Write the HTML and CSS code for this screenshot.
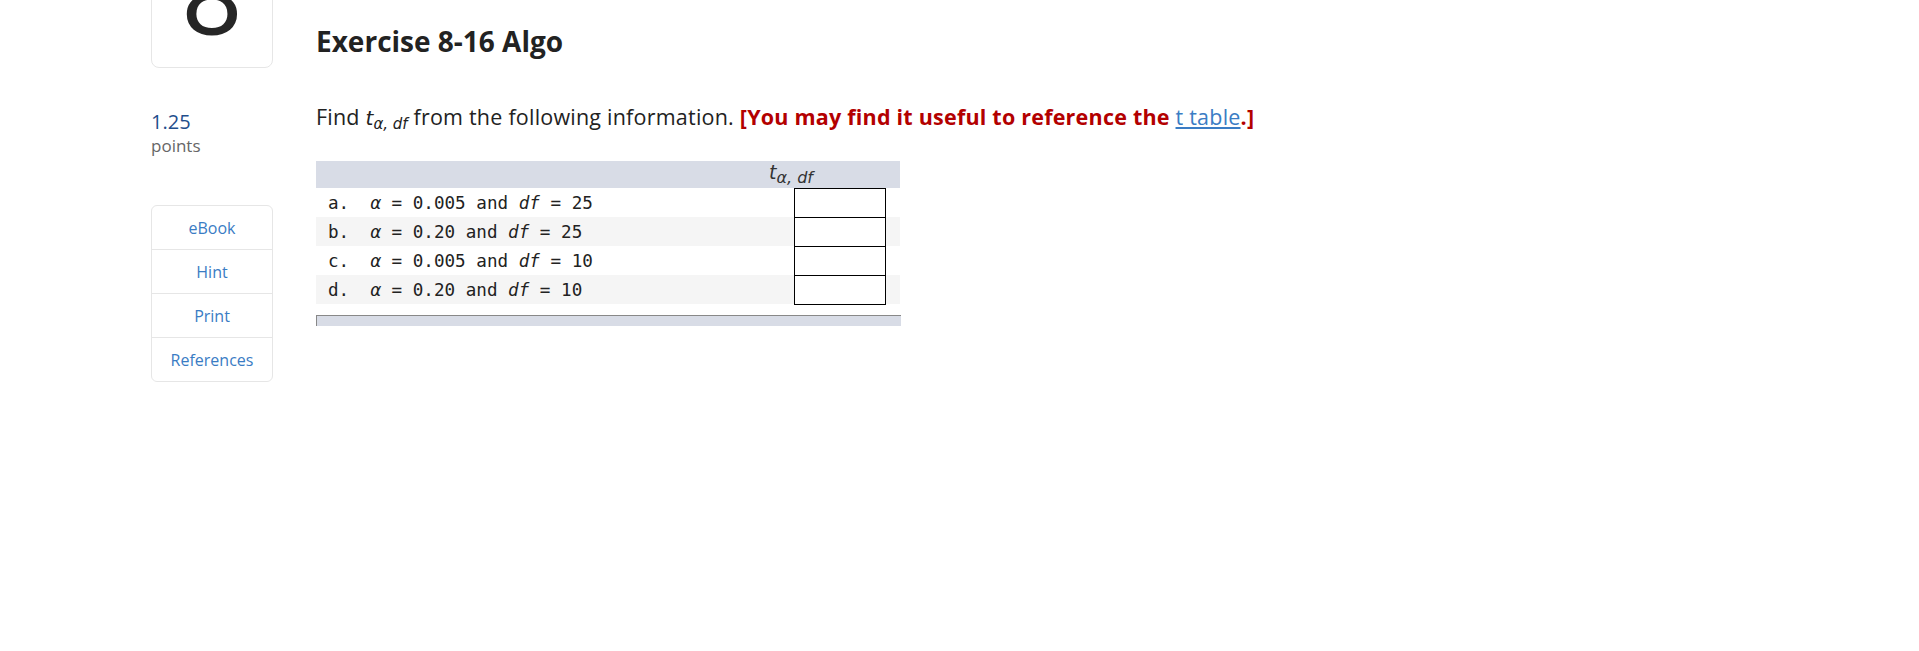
FILE: index.html
```html
<!DOCTYPE html>
<html>
<head>
<meta charset="utf-8">
<link rel="stylesheet" href="styles.css">
</head>
<body>
<div class="page">
  <div class="left">
    <div class="qnum"><span class="digit">8</span></div>
    <div class="points">
      <div class="pts-num">1.25</div>
      <div class="pts-label">points</div>
    </div>
    <div class="tools">
      <div class="tool">eBook</div>
      <div class="tool">Hint</div>
      <div class="tool">Print</div>
      <div class="tool">References</div>
    </div>
  </div>
  <div class="main">
    <h1 class="title">Exercise 8-16 Algo</h1>
    <p class="question">Find <span class="math">t<sub>α, df</sub></span> from the following information. <span class="hint">[You may find it useful to reference the <a class="link">t table</a>.]</span></p>
    <div class="qtable">
      <div class="thead"><span class="math hmath">t<sub>α, df</sub></span></div>
      <div class="trow"><span class="mono">a.  <i class="mi">α</i> = 0.005 and <i class="mi">df</i> = 25</span><span class="inp"></span></div>
      <div class="trow alt"><span class="mono">b.  <i class="mi">α</i> = 0.20 and <i class="mi">df</i> = 25</span><span class="inp"></span></div>
      <div class="trow"><span class="mono">c.  <i class="mi">α</i> = 0.005 and <i class="mi">df</i> = 10</span><span class="inp"></span></div>
      <div class="trow alt"><span class="mono">d.  <i class="mi">α</i> = 0.20 and <i class="mi">df</i> = 10</span><span class="inp"></span></div>
    </div>
    <div class="tfoot"></div>
  </div>
</div>
</body>
</html>
```

FILE: styles.css
```css
html, body {
  margin: 0;
  padding: 0;
  background: #fff;
  overflow: hidden;
}
body {
  font-family: "Open Sans", "Liberation Sans", sans-serif;
  color: #222;
}
.page {
  display: flex;
  padding-left: 151px;
}
.left {
  width: 122px;
  flex: none;
}
.qnum {
  box-sizing: border-box;
  height: 120px;
  margin-top: -52px;
  border: 1px solid #e6e6e6;
  border-radius: 8px;
  overflow: hidden;
  display: flex;
  justify-content: center;
  align-items: flex-end;
}
.digit {
  font-family: "Lato", sans-serif;
  font-weight: 400;
  font-size: 104px;
  line-height: 1;
  color: #262626;
  margin-bottom: 20px;
}
.points {
  margin-top: 41px;
}
.pts-num {
  font-size: 20px;
  line-height: 26px;
  color: #1f4e8c;
}
.pts-label {
  font-size: 17px;
  line-height: 22px;
  color: #666;
}
.tools {
  margin-top: 48px;
  border: 1px solid #e6e6e6;
  border-radius: 6px;
}
.tool {
  height: 43px;
  display: flex;
  align-items: center;
  justify-content: center;
  font-size: 16px;
  color: #3a7cc4;
  border-top: 1px solid #e6e6e6;
}
.tool:first-child {
  border-top: none;
}
.main {
  margin-left: 43px;
  flex: none;
}
.title {
  margin: 0;
  padding-top: 22px;
  font-size: 28px;
  line-height: 38px;
  font-weight: 700;
  color: #222;
}
.question {
  margin: 43px 0 0 0;
  font-size: 21.5px;
  line-height: 28px;
  letter-spacing: 0.22px;
  color: #222;
}
.math {
  font-family: "DejaVu Sans", sans-serif;
  font-style: italic;
  font-size: 20px;
  letter-spacing: 0;
}
.math sub {
  font-size: 15px;
  vertical-align: -4px;
}
.hint {
  color: #b30000;
  font-weight: 700;
}
.link {
  color: #3a7cc4;
  font-weight: 400;
  text-decoration: underline;
}
.qtable {
  margin-top: 23px;
  width: 584px;
}
.thead {
  height: 27px;
  background: #d8dce6;
  display: flex;
  align-items: flex-start;
  padding-left: 453px;
  box-sizing: border-box;
}
.hmath {
  font-size: 19px;
  line-height: 22px;
  color: #333;
}
.hmath sub {
  font-size: 16px;
  vertical-align: -4px;
}
.trow {
  height: 29px;
  display: flex;
  align-items: center;
  justify-content: space-between;
  padding: 0 14px 0 12px;
  background: #fff;
}
.trow.alt {
  background: #f5f5f5;
}
.mono {
  font-family: "DejaVu Sans Mono", monospace;
  font-size: 17.6px;
  white-space: pre;
  color: #222;
}
.mi {
  font-style: italic;
}
.inp {
  box-sizing: border-box;
  width: 92px;
  height: 30px;
  border: 1px solid #000;
  background: #fff;
  align-self: flex-start;
}
.tfoot {
  margin-top: 11px;
  width: 585px;
  height: 11px;
  box-sizing: border-box;
  background: #d8dce6;
  border-top: 1px solid #888;
  border-left: 1px solid #888;
}
```
